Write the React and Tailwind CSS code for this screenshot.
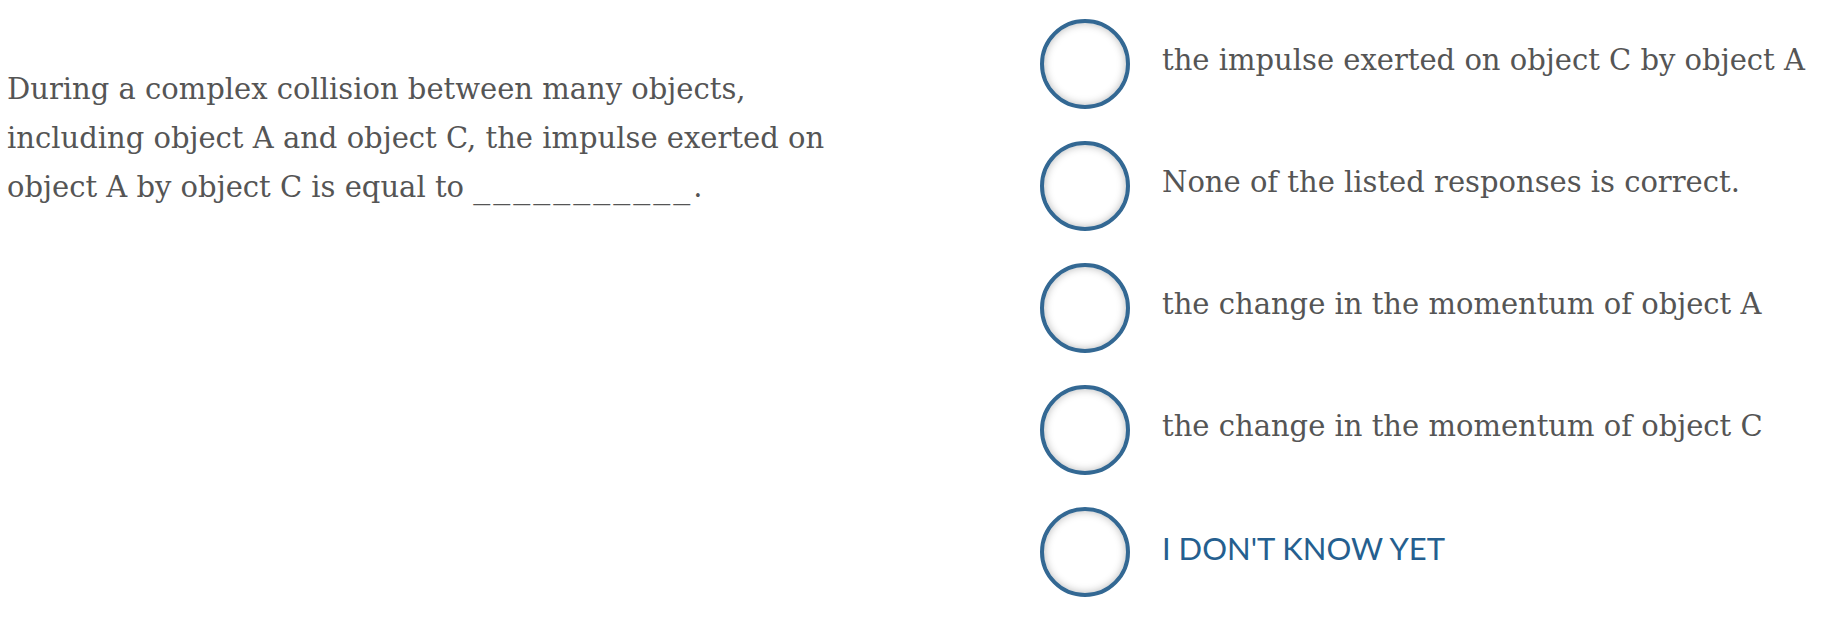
import React from 'react';

const options = [
    'the impulse exerted on object C by object A',
    'None of the listed responses is correct.',
    'the change in the momentum of object A',
    'the change in the momentum of object C',
];

function Radio() {
    return (
        <span className="block w-[90px] h-[90px] shrink-0 rounded-full border-[4px] border-[#336893] bg-white shadow-[inset_0_0_8px_rgba(0,0,0,0.28)]"></span>
    );
}

export default function App() {
    return (
        <div className="w-[1846px] h-[642px] bg-white flex font-['DejaVu_Serif',serif] text-[#555555]">
            <div className="w-[1040px] shrink-0 pl-[7px] pt-[65px]">
                <p className="w-[900px] text-[29px] leading-[49px]">
                    During a complex collision between many objects,<br />
                    including object A and object C, the impulse exerted on<br />
                    object A by object C is equal to <span className="text-[34px] leading-[40px] tracking-[3px]">___________</span>.
                </p>
            </div>
            <div className="flex flex-col gap-[32px] pt-[19px]">
                {options.map((o) => (
                    <label key={o} className="flex items-center gap-[32px] cursor-pointer">
                        <Radio />
                        <span className="text-[29px] leading-[40px] -mt-[8px]">{o}</span>
                    </label>
                ))}
                <label className="flex items-center gap-[32px] cursor-pointer">
                    <Radio />
                    <span className="font-['Lato',sans-serif] text-[31px] leading-[40px] text-[#255f8f] -mt-[8px]">I DON'T KNOW YET</span>
                </label>
            </div>
        </div>
    );
}
